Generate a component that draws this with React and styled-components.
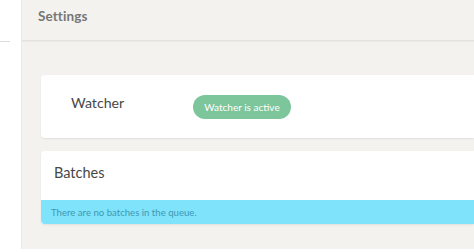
import React from "react";
import styled, { createGlobalStyle } from "styled-components";

const GlobalStyle = createGlobalStyle`
  html, body {
    margin: 0;
    padding: 0;
    background: #ffffff;
    overflow: hidden;
  }
  body {
    font-family: Lato, "Noto Sans", sans-serif;
  }
`;

const Layout = styled.div`
  display: flex;
  width: 474px;
  height: 252px;
`;

const Sidebar = styled.div`
  width: 21px;
  flex-shrink: 0;
  background: #ffffff;
  padding-top: 41px;
  box-sizing: border-box;
`;

const SideRule = styled.div`
  width: 10px;
  height: 1px;
  background: #dcdcdc;
`;

const Main = styled.div`
  flex: 1;
  display: flex;
  flex-direction: column;
  background: #f3f2ef;
  border-left: 1px solid #ebeae7;
  height: 249px;
  overflow: hidden;
`;

const Header = styled.div`
  height: 41px;
  flex-shrink: 0;
  display: flex;
  align-items: flex-start;
  padding: 8px 0 0 16px;
  box-sizing: border-box;
  border-bottom: 1px solid #e3e2df;
  box-shadow: 0 1px 1px rgba(0, 0, 0, 0.03);
`;

const Title = styled.h1`
  margin: 0;
  font-size: 13.5px;
  font-weight: 700;
  color: #767676;
  letter-spacing: 0.1px;
`;

const Content = styled.div`
  display: flex;
  flex-direction: column;
  gap: 13px;
  padding: 34px 0 0 19px;
`;

const Card = styled.div`
  background: #ffffff;
  border-radius: 4px 0 0 4px;
  box-shadow: 0 1px 2px rgba(0, 0, 0, 0.08);
  overflow: hidden;
`;

const SettingRow = styled.div`
  display: flex;
  align-items: center;
  height: 63px;
  padding-left: 30px;
  padding-top: 1px;
  box-sizing: border-box;
`;

const Label = styled.div`
  width: 122px;
  font-size: 14.2px;
  color: #474747;
  padding-bottom: 9px;
`;

const Badge = styled.span`
  display: inline-flex;
  align-items: center;
  justify-content: center;
  width: 98px;
  height: 24px;
  border-radius: 12px;
  background: ${(p) => p.color};
  color: #ffffff;
  font-size: 10px;
`;

const CardHeader = styled.div`
  height: 49px;
  display: flex;
  align-items: center;
  padding: 0 0 6px 13px;
  box-sizing: border-box;
  font-size: 14.5px;
  color: #474747;
`;

const Alert = styled.div`
  height: 24px;
  display: flex;
  align-items: center;
  padding-left: 10px;
  background: #7fe3fb;
  color: #3f98b2;
  font-size: 9.6px;
`;

export default function App() {
  return (
    <>
      <GlobalStyle />
      <Layout>
        <Sidebar>
          <SideRule />
        </Sidebar>
        <Main>
          <Header>
            <Title>Settings</Title>
          </Header>
          <Content>
            <Card>
              <SettingRow>
                <Label>Watcher</Label>
                <Badge color="#7dc59b">Watcher is active</Badge>
              </SettingRow>
            </Card>
            <Card>
              <CardHeader>Batches</CardHeader>
              <Alert>There are no batches in the queue.</Alert>
            </Card>
          </Content>
        </Main>
      </Layout>
    </>
  );
}
